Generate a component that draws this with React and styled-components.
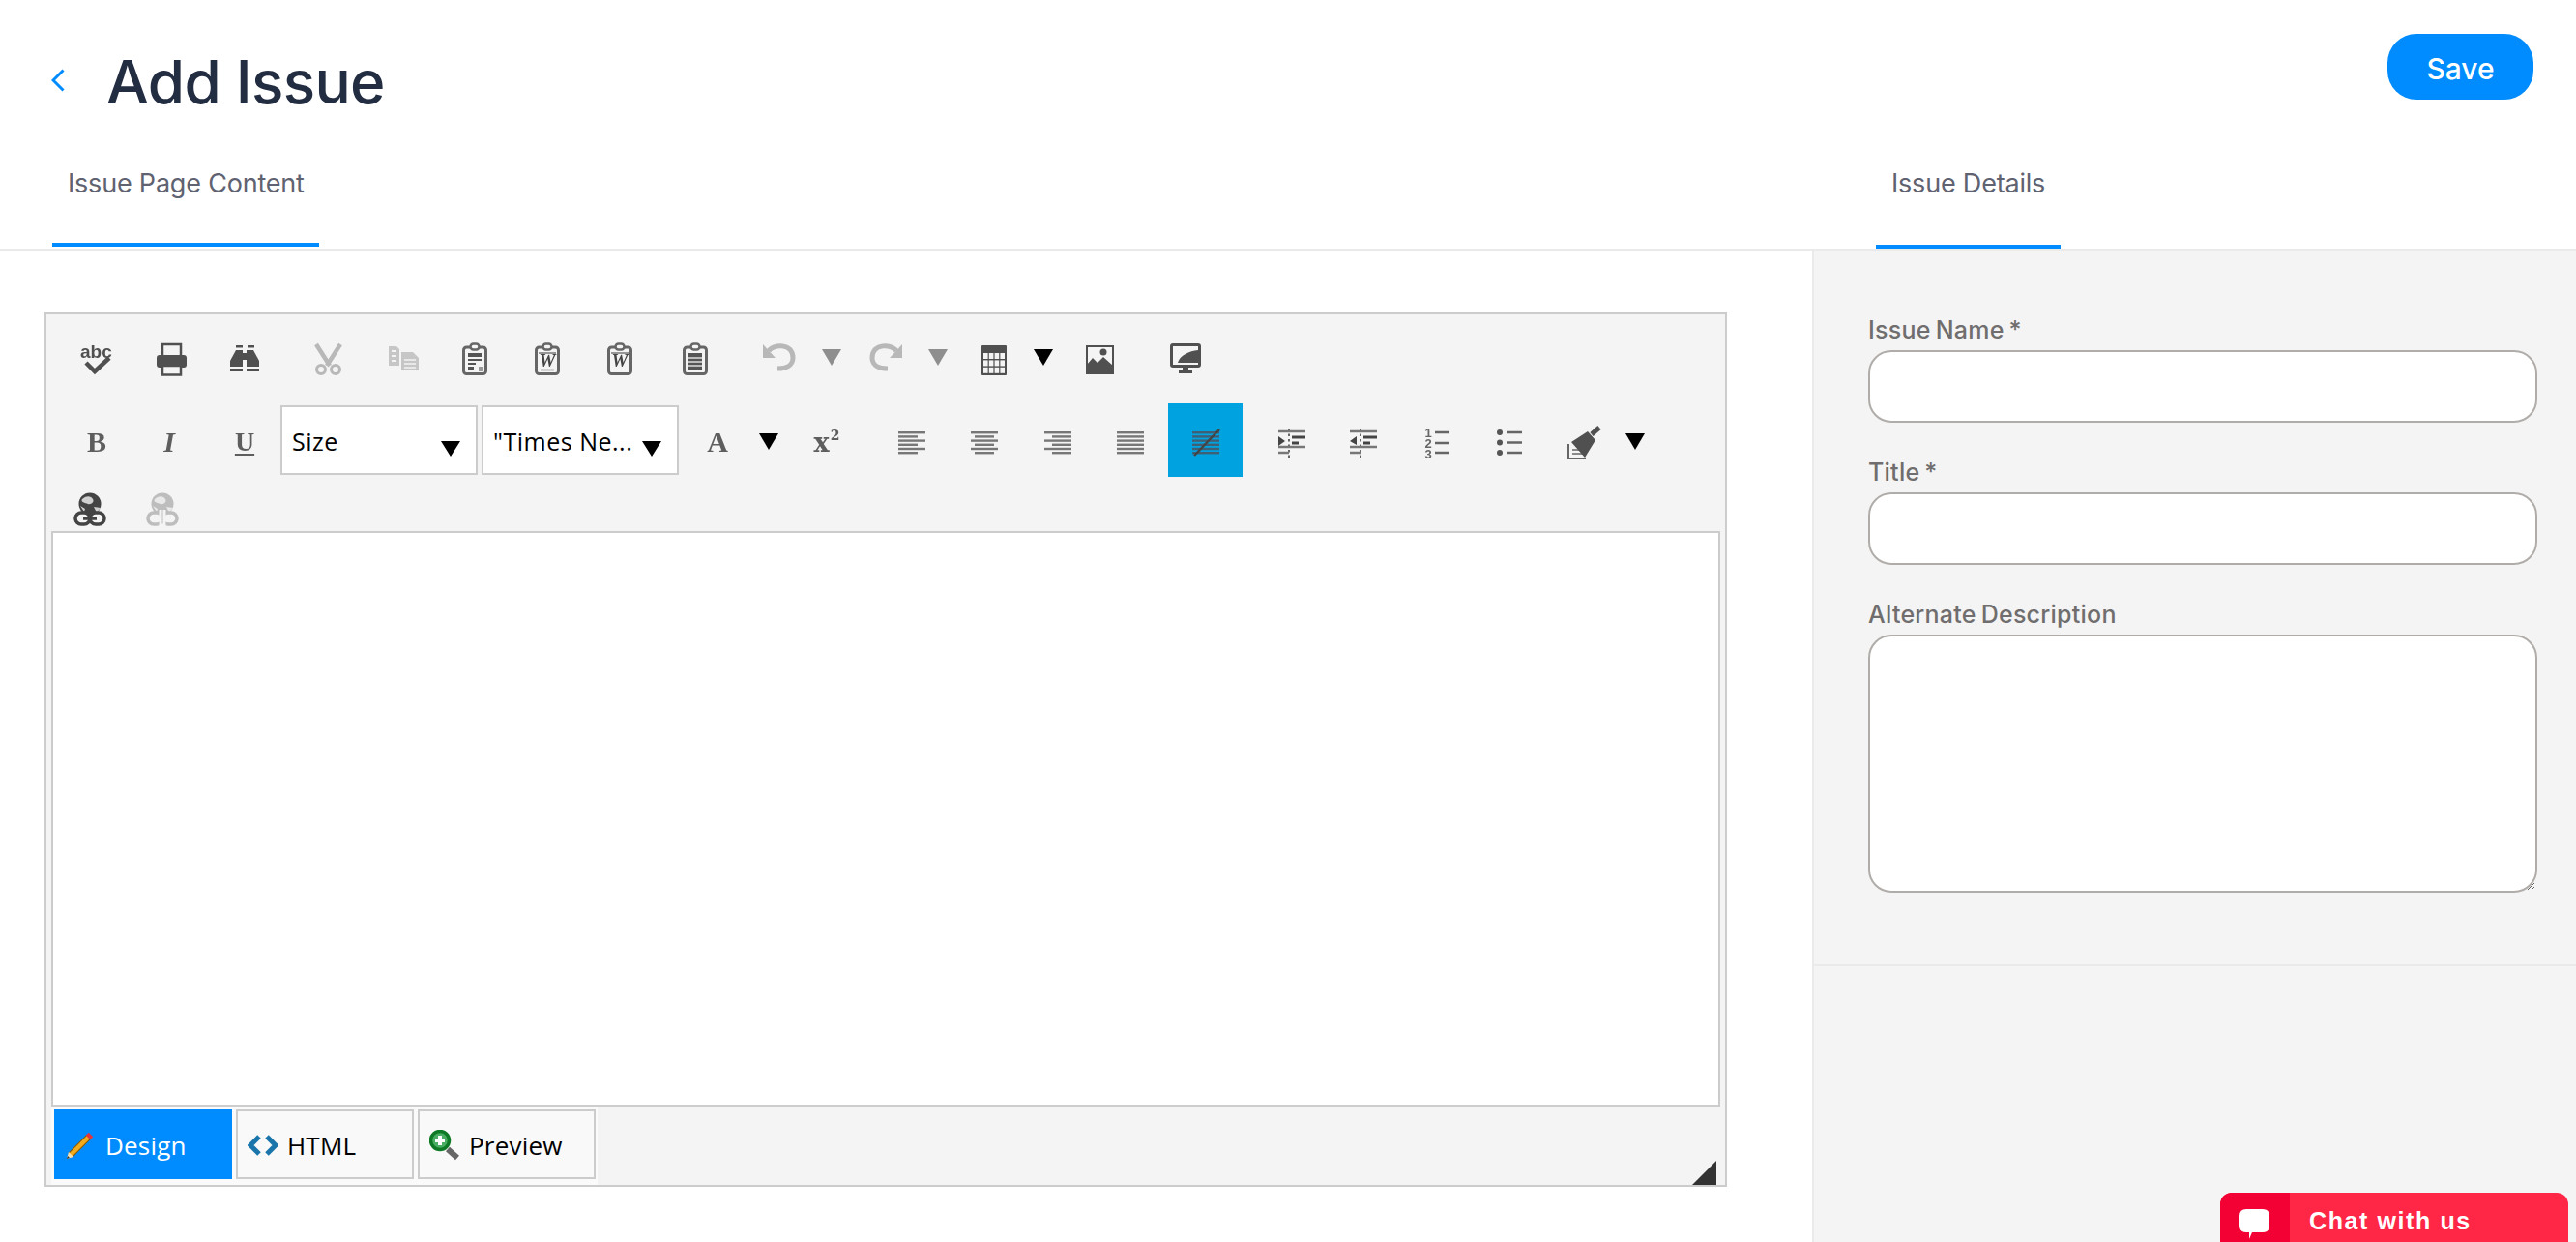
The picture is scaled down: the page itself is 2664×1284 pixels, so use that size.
import styled, { createGlobalStyle } from 'styled-components'

const Global = createGlobalStyle`
  html, body { margin: 0; padding: 0; background: #fff; }
  * { box-sizing: border-box; }
`

const S = {
  Page: styled.div`
    position: relative;
    width: 2664px;
    height: 1284px;
    overflow: hidden;
    display: flex;
    flex-direction: column;
    font-family: Inter, 'Liberation Sans', sans-serif;
  `,
  Header: styled.header`
    height: 148px;
    display: flex;
    align-items: flex-start;
    padding-left: 53px;
  `,
  Back: styled.svg`
    width: 14px;
    height: 24px;
    margin-top: 71px;
    flex: none;
  `,
  Title: styled.h1`
    margin: 45px 0 0 43px;
    font-size: 62px;
    line-height: 80px;
    font-weight: 500;
    letter-spacing: -0.7px;
    color: #232d42;
  `,
  Save: styled.button`
    margin: 35px 44px 0 auto;
    width: 151px;
    height: 68px;
    padding: 3px 0 0;
    border: 0;
    border-radius: 30px;
    background: #008cff;
    color: #fff;
    font-family: inherit;
    font-size: 30px;
    font-weight: 500;
  `,
  TabBar: styled.nav`
    height: 111px;
    display: flex;
    border-bottom: 2px solid #eaeaea;
  `,
  TabColumn: styled.div`
    display: flex;
    align-items: flex-end;
    width: ${({ $w }) => $w}px;
    padding-left: ${({ $pad }) => $pad}px;
  `,
  PageTab: styled.div`
    height: 107px;
    width: ${({ $w }) => $w}px;
    margin-bottom: ${({ $mb }) => $mb}px;
    padding: ${({ $top }) => $top}px 0 0 ${({ $pad }) => $pad}px;
    border-bottom: 4px solid #008cff;
    font-size: 27px;
    line-height: 40px;
    letter-spacing: -0.2px;
    color: #5f6270;
    white-space: nowrap;
  `,
  Body: styled.div`
    flex: 1;
    display: flex;
    min-height: 0;
  `,
  Main: styled.main`
    flex: 1;
    padding: 64px 0 0 46px;
  `,
  Sidebar: styled.aside`
    width: 790px;
    flex: none;
    background: #f4f4f4;
    border-left: 2px solid #eaeaea;
  `,
  Form: styled.form`
    display: flex;
    flex-direction: column;
    gap: 36px;
    padding: 67px 0 74px 56px;
    border-bottom: 2px solid #eaeaea;
  `,
  Field: styled.label`
    display: flex;
    flex-direction: column;
    gap: 6px;
    font-size: 25px;
    line-height: 30px;
    font-weight: 500;
    letter-spacing: 0.25px;
    word-spacing: -2px;
    color: #6f6d6d;
  `,
  Input: styled.input`
    width: 692px;
    height: 75px;
    border: 2px solid #b0aca9;
    border-radius: 24px;
    background: #fff;
    outline: 0;
  `,
  TextArea: styled.textarea`
    display: block;
    width: 692px;
    height: 267px;
    border: 2px solid #b0aca9;
    border-radius: 24px;
    background: #fff;
    outline: 0;
  `,
  Editor: styled.section`
    position: relative;
    width: 1740px;
    height: 904px;
    border: 2px solid #ccc;
    background: #f4f4f4;
    display: flex;
    flex-direction: column;
  `,
  Row: styled.div`
    display: flex;
    align-items: center;
    flex: none;
    height: ${({ $h }) => $h}px;
    padding-top: ${({ $pt }) => $pt || 0}px;
    padding-bottom: ${({ $pb }) => $pb || 0}px;
  `,
  Tool: styled.div`
    flex: none;
    width: 72px;
    height: ${({ $drop }) => 40 + ($drop || 0)}px;
    padding-top: ${({ $drop }) => $drop || 0}px;
    margin-left: ${({ $ml }) => $ml || 0}px;
    display: flex;
    align-items: center;
    justify-content: center;
  `,
  Highlight: styled.div`
    flex: none;
    width: 77px;
    height: 76px;
    padding-top: 4px;
    margin-left: ${({ $ml }) => $ml || 0}px;
    background: #00a3e0;
    display: flex;
    align-items: center;
    justify-content: center;
  `,
  Caret: styled.div`
    flex: none;
    width: 30px;
    height: ${({ $drop }) => 40 + ($drop || 0)}px;
    padding-top: ${({ $drop }) => $drop || 0}px;
    margin-left: ${({ $ml }) => $ml || 0}px;
    display: flex;
    align-items: center;
    justify-content: center;
    &::before {
      content: '';
      border-left: 10px solid transparent;
      border-right: 10px solid transparent;
      border-top: 17px solid ${({ $off }) => ($off ? '#8e8e8e' : '#000')};
    }
  `,
  Select: styled.div`
    flex: none;
    width: 204px;
    height: 72px;
    margin-left: ${({ $ml }) => $ml || 0}px;
    background: #fff;
    border: 2px solid #ccc;
    padding: 2px 0 0 10px;
    display: flex;
    align-items: center;
    position: relative;
    font-family: 'Open Sans', 'Noto Sans', sans-serif;
    font-size: 25px;
    letter-spacing: 0.5px;
    color: #000;
    &::after {
      content: '';
      position: absolute;
      right: ${({ $caretRight }) => $caretRight}px;
      top: 35px;
      border-left: 10px solid transparent;
      border-right: 10px solid transparent;
      border-top: 16px solid #000;
    }
  `,
  Letter: styled.span`
    font-family: ${({ $slab }) => ($slab ? "'DejaVu Serif'" : "'Liberation Serif'")}, serif;
    font-weight: 700;
    font-style: ${({ $italic }) => ($italic ? 'italic' : 'normal')};
    font-size: ${({ $size }) => $size || 30}px;
    line-height: 1;
    color: #5e5e5e;
    filter: blur(0.4px);
    text-decoration: ${({ $under }) => ($under ? 'underline' : 'none')};
    text-decoration-thickness: 2px;
    text-underline-offset: 3px;
    sup {
      font-size: 14px;
      margin-left: 1px;
      vertical-align: 12px;
      line-height: 0;
    }
  `,
  Content: styled.div`
    flex: none;
    height: 595px;
    margin: 0 5px;
    background: #fff;
    border: 2px solid #ccc;
  `,
  ModeBar: styled.div`
    flex: none;
    align-self: flex-start;
    display: flex;
    gap: 4px;
    height: 81px;
    margin-left: 5px;
    padding: 3px 2px 6px 3px;
    background: #fafafa;
  `,
  Mode: styled.div`
    width: 184px;
    height: 72px;
    padding: 2px 0 0 10px;
    display: flex;
    align-items: center;
    border: 2px solid ${({ $active }) => ($active ? '#008cff' : '#ccc')};
    background: ${({ $active }) => ($active ? '#008cff' : '#f9f9f9')};
    color: ${({ $active }) => ($active ? '#fff' : '#000')};
    font-family: 'Open Sans', 'Noto Sans', sans-serif;
    font-size: 26px;
    letter-spacing: 0.2px;
  `,
  ModeIcon: styled.span`
    width: 41px;
    flex: none;
    display: flex;
    align-items: center;
  `,
  Grip: styled.svg`
    position: absolute;
    right: 9px;
    bottom: 0;
    width: 25px;
    height: 25px;
  `,
  Chat: styled.div`
    position: absolute;
    right: 8px;
    bottom: 0;
    width: 360px;
    height: 51px;
    display: flex;
    border-radius: 12px 12px 0 0;
    overflow: hidden;
    background: #ff2646;
    color: #fff;
    font-family: 'Liberation Sans', sans-serif;
    font-weight: 700;
    font-size: 25px;
  `,
  ChatIcon: styled.div`
    width: 72px;
    background: #f30035;
    padding: 17px 0 0 20px;
  `,
  ChatText: styled.div`
    padding: 15px 0 0 20px;
    letter-spacing: 1.6px;
  `,
  Ico: styled.svg`
    width: 36px;
    height: 36px;
    flex: none;
    overflow: visible;
    filter: blur(0.5px);
  `,
}

const DARK = '#505050'
const BG = '#f4f4f4'
const OFF = '#b8b8b8'

const Spell = () => (
  <S.Ico viewBox="0 0 36 36">
    <text x="1" y="19" fontFamily="Liberation Sans" fontWeight="700" fontSize="19" fill={DARK}>abc</text>
    <path d="M7 24l9 9L31 19" fill="none" stroke={DARK} strokeWidth="4.5" />
  </S.Ico>
)
const Printer = () => (
  <S.Ico viewBox="0 0 36 36">
    <rect x="9" y="5" width="19" height="14" fill="none" stroke={DARK} strokeWidth="2.5" />
    <rect x="3" y="16" width="31" height="13" rx="3" fill={DARK} />
    <rect x="9" y="27" width="19" height="9.5" fill={BG} stroke={DARK} strokeWidth="2.5" />
  </S.Ico>
)
const Binoculars = () => (
  <S.Ico viewBox="0 0 36 36">
    <g fill={DARK}>
      <rect x="9" y="6" width="7" height="2.5" />
      <rect x="21" y="6" width="7" height="2.5" />
      <path d="M3 28v-6l6-11h7v17z" />
      <path d="M33 28v-6l-6-11h-7v17z" />
      <rect x="16" y="14" width="4" height="7" />
      <rect x="3" y="30" width="13" height="3" />
      <rect x="20" y="30" width="13" height="3" />
    </g>
  </S.Ico>
)
const Scissors = () => (
  <S.Ico viewBox="0 0 36 36">
    <path d="M7 5l14 22M32 5L18 27" fill="none" stroke={OFF} strokeWidth="4.5" />
    <circle cx="12" cy="31" r="4.5" fill="none" stroke={OFF} strokeWidth="3" />
    <circle cx="27" cy="31" r="4.5" fill="none" stroke={OFF} strokeWidth="3" />
  </S.Ico>
)
const CopyDocs = () => (
  <S.Ico viewBox="0 0 36 36">
    <path d="M2 7h8l3 3v17H2z" fill="#c6c6c6" />
    <path d="M5 12h5M5 17h5M5 22h5" stroke={BG} strokeWidth="2" />
    <path d="M15 13h12l6 6v13H15z" fill="#c6c6c6" />
    <path d="M18 21h12M18 25h12M18 29h12" stroke={BG} strokeWidth="1.5" />
  </S.Ico>
)
const Clipboard = ({ children }) => (
  <S.Ico viewBox="0 0 36 36">
    <rect x="6.5" y="8" width="23" height="27.5" rx="3" fill={BG} stroke="#666" strokeWidth="3" />
    <rect x="13.5" y="4.5" width="9" height="6" rx="3" fill={BG} stroke="#666" strokeWidth="2.5" />
    {children}
  </S.Ico>
)
const PasteW = ({ under }) => (
  <Clipboard>
    <path d="M9 14h18" stroke="#777" strokeWidth="1.5" />
    <text x="18" y="28" textAnchor="middle" fontFamily="Liberation Serif" fontStyle="italic" fontWeight="700" fontSize="19" fill="#444">W</text>
    {under && <path d="M11 31.5h14" stroke="#777" strokeWidth="1.5" />}
  </Clipboard>
)
const Paste = () => (
  <Clipboard>
    <path d="M11 14h14v4H11zM11 20h14v2H11zM11 24h8v2h-8zM11 28h6v3h-6z" fill="#555" />
    <rect x="22" y="28" width="5" height="5" fill="#999" />
  </Clipboard>
)
const PastePlain = () => (
  <Clipboard>
    <rect x="11" y="14" width="14" height="17" fill="#555" />
    <path d="M11 19h14M11 23h14M11 27h14" stroke="#ddd" strokeWidth="1.5" />
  </Clipboard>
)
const Undo = () => (
  <S.Ico viewBox="0 0 36 36">
    <path d="M2 19V5l13 14z" fill={OFF} />
    <path d="M8 12c4-7 25-9 25 7 0 8-8 11-16 11" fill="none" stroke={OFF} strokeWidth="5" />
  </S.Ico>
)
const Redo = () => (
  <S.Ico viewBox="0 0 36 36">
    <g transform="translate(36 0) scale(-1 1)">
      <path d="M2 19V5l13 14z" fill={OFF} />
      <path d="M8 12c4-7 25-9 25 7 0 8-8 11-16 11" fill="none" stroke={OFF} strokeWidth="5" />
    </g>
  </S.Ico>
)
const Table = () => (
  <S.Ico viewBox="0 0 36 36">
    <rect x="5" y="6" width="26" height="31" rx="1" fill={DARK} />
    {[0, 1, 2].map((r) =>
      [0, 1, 2, 3].map((c) => (
        <rect key={`${r}-${c}`} x={7 + c * 5.8} y={14 + r * 7.4} width="4.6" height="6" fill={BG} />
      ))
    )}
  </S.Ico>
)
const Picture = () => (
  <S.Ico viewBox="0 0 36 36">
    <rect x="5" y="7" width="27" height="28" fill={BG} stroke={DARK} strokeWidth="2" />
    <path d="M5 26l6-7 5 5 6-6 10 9v8H5z" fill={DARK} />
    <circle cx="22" cy="13" r="3.5" fill={DARK} />
  </S.Ico>
)
const Monitor = () => (
  <S.Ico viewBox="0 0 36 36">
    <rect x="3.5" y="5.5" width="29" height="22" rx="1.5" fill={BG} stroke={DARK} strokeWidth="3" />
    <path d="M10 24c2-8 12-12 21-13v13z" fill={DARK} />
    <path d="M15 29h6v3h-6zM11 32h14v3H11z" fill={DARK} />
  </S.Ico>
)
const Align = ({ lines, fill = '#777', slash }) => (
  <S.Ico viewBox="0 0 36 36">
    {lines.map(([x, w], i) => (
      <rect key={i} x={x} y={7 + i * 4.2} width={w} height="2.4" fill={fill} />
    ))}
    {slash && <path d="M6 32L32 5" stroke="#444" strokeWidth="2.5" />}
  </S.Ico>
)
const Indent = ({ out }) => (
  <S.Ico viewBox="0 0 36 36">
    <path d="M15 4v30" stroke="#666" strokeWidth="2" strokeDasharray="2.5 3" />
    <path d="M4 7h28M4 23h28M4 29h11" stroke="#777" strokeWidth="2.4" />
    <path d="M18 13h14M18 19h7" stroke="#444" strokeWidth="2.8" />
    <path d={out ? 'M4 17l7-5v9z' : 'M4 12l7 5-7 5z'} fill="#444" />
  </S.Ico>
)
const Numbered = () => (
  <S.Ico viewBox="0 0 36 36">
    <g fontFamily="Liberation Sans" fontSize="13" fontWeight="700" fill="#666" textAnchor="middle">
      <text x="8" y="13">1</text>
      <text x="8" y="24">2</text>
      <text x="8" y="35">3</text>
    </g>
    <path d="M15 8h15M15 19h15M15 29h15" stroke="#666" strokeWidth="2.4" />
  </S.Ico>
)
const Bullets = () => (
  <S.Ico viewBox="0 0 36 36">
    <g fill="#555">
      <circle cx="8" cy="8" r="3" />
      <circle cx="8" cy="18.5" r="3" />
      <circle cx="8" cy="29" r="3" />
    </g>
    <path d="M15 8h16M15 18.5h16M15 29h16" stroke="#666" strokeWidth="2.4" />
  </S.Ico>
)
const Brush = () => (
  <S.Ico viewBox="0 0 36 36">
    <path d="M2 20v15h18" fill="none" stroke="#666" strokeWidth="2" />
    <path d="M6 26h9M6 30h12" stroke="#666" strokeWidth="1.5" />
    <path d="M5 18l17-11 8 9-11 18z" fill={DARK} />
    <path d="M26 10l8-7" stroke={DARK} strokeWidth="5" />
  </S.Ico>
)
const Chain = ({ color, broken }) => (
  <S.Ico viewBox="0 0 36 36">
    <circle cx="18" cy="12" r="11.5" fill={color} />
    <path d="M10 7c5-4 9-3 11 0s-2 6-5 5-8-2-6-5zM22 15l7 1-4 5zM8 14l5 3-1 3z" fill={BG} opacity="0.8" />
    <rect x="3" y="21" width="15" height="12" rx="6" fill={BG} stroke={color} strokeWidth="3.5" />
    <rect x="18" y="21" width="15" height="12" rx="6" fill={BG} stroke={color} strokeWidth="3.5" />
    {broken ? (
      <path d="M16 18v18M20 18v18" stroke={BG} strokeWidth="3" />
    ) : (
      <path d="M11 27h14" stroke={color} strokeWidth="3.5" />
    )}
  </S.Ico>
)

const Pencil = () => (
  <svg width="30" height="30" viewBox="0 0 30 30">
    <path d="M5 25L24 6" stroke="#8a5a00" strokeWidth="6.5" />
    <path d="M5 25L24 6" stroke="#f2ab1c" strokeWidth="4.5" />
    <path d="M23 7l3-3" stroke="#e3343d" strokeWidth="6.5" />
    <path d="M1 29l2-7 5 5z" fill="#f6dfae" />
    <path d="M1 29l1-3 2 2z" fill="#333" />
  </svg>
)
const Brackets = () => (
  <svg width="32" height="22" viewBox="0 0 32 22">
    <path d="M12 2l-9 9 9 9M20 2l9 9-9 9" fill="none" stroke="#1a75ab" strokeWidth="5" />
  </svg>
)
const Magnifier = () => (
  <svg width="32" height="32" viewBox="0 0 32 32">
    <path d="M19 20l10 9" stroke="#666" strokeWidth="6" />
    <circle cx="11" cy="11" r="9.5" fill="#49ad62" stroke="#0f7a25" strokeWidth="3.5" />
    <path d="M11 6v10M6 11h10" stroke="#fff" strokeWidth="4" />
  </svg>
)

const left = [[4, 28], [4, 20], [4, 28], [4, 20], [4, 28], [4, 20]]
const center = [[4, 28], [8, 20], [4, 28], [8, 20], [4, 28], [8, 20]]
const right = [[4, 28], [12, 20], [4, 28], [12, 20], [4, 28], [12, 20]]
const justify = [[4, 28], [4, 28], [4, 28], [4, 28], [4, 28], [4, 28]]

const App = () => (
  <S.Page>
    <Global />
    <S.Header>
      <S.Back viewBox="0 0 14 24">
        <path d="M12.5 1.5L2 12l10.5 10.5" fill="none" stroke="#008cff" strokeWidth="3" />
      </S.Back>
      <S.Title>Add Issue</S.Title>
      <S.Save type="button">Save</S.Save>
    </S.Header>
    <S.TabBar>
      <S.TabColumn $w={1874} $pad={54}>
        <S.PageTab $w={276} $pad={16} $mb={2} $top={22}>Issue Page Content</S.PageTab>
      </S.TabColumn>
      <S.TabColumn $w={790} $pad={66}>
        <S.PageTab $w={191} $pad={16} $mb={0} $top={20}>Issue Details</S.PageTab>
      </S.TabColumn>
    </S.TabBar>
    <S.Body>
      <S.Main>
        <S.Editor>
          <S.Row $h={92} $pb={4}>
            <S.Tool $ml={16}><Spell /></S.Tool>
            <S.Tool $ml={5}><Printer /></S.Tool>
            <S.Tool $ml={4}><Binoculars /></S.Tool>
            <S.Tool $ml={13}><Scissors /></S.Tool>
            <S.Tool $ml={8}><CopyDocs /></S.Tool>
            <S.Tool $ml={1}><Paste /></S.Tool>
            <S.Tool $ml={3}><PasteW under /></S.Tool>
            <S.Tool $ml={3}><PasteW /></S.Tool>
            <S.Tool $ml={6}><PastePlain /></S.Tool>
            <S.Tool $ml={14}><Undo /></S.Tool>
            <S.Caret $ml={4} $off />
            <S.Tool $ml={6}><Redo /></S.Tool>
            <S.Caret $ml={2} $off />
            <S.Tool $ml={7}><Table /></S.Tool>
            <S.Caret $ml={0} />
            <S.Tool $ml={7}><Picture /></S.Tool>
            <S.Tool $ml={17}><Monitor /></S.Tool>
          </S.Row>
          <S.Row $h={76}>
            <S.Tool $ml={16} $drop={4}><S.Letter>B</S.Letter></S.Tool>
            <S.Tool $ml={3} $drop={4}><S.Letter $italic>I</S.Letter></S.Tool>
            <S.Tool $ml={6} $drop={4}><S.Letter $under $size={28}>U</S.Letter></S.Tool>
            <S.Select $ml={1} $caretRight={16}>Size</S.Select>
            <S.Select $ml={4} $caretRight={16}>"Times Ne...</S.Select>
            <S.Tool $ml={4} $drop={4}><S.Letter>A</S.Letter></S.Tool>
            <S.Caret $ml={2} $drop={2} />
            <S.Tool $ml={9} $drop={4}><S.Letter $slab $size={27}>x<sup>2</sup></S.Letter></S.Tool>
            <S.Tool $ml={16} $drop={4}><Align lines={left} /></S.Tool>
            <S.Tool $ml={3} $drop={4}><Align lines={center} /></S.Tool>
            <S.Tool $ml={4} $drop={4}><Align lines={right} /></S.Tool>
            <S.Tool $ml={3} $drop={4}><Align lines={justify} /></S.Tool>
            <S.Highlight $ml={3}><Align lines={justify} fill="#3f5f74" slash /></S.Highlight>
            <S.Tool $ml={15} $drop={4}><Indent /></S.Tool>
            <S.Tool $ml={2} $drop={4}><Indent out /></S.Tool>
            <S.Tool $ml={5} $drop={4}><Numbered /></S.Tool>
            <S.Tool $ml={2} $drop={4}><Bullets /></S.Tool>
            <S.Tool $ml={5} $drop={4}><Brush /></S.Tool>
            <S.Caret $ml={2} $drop={2} />
          </S.Row>
          <S.Row $h={56} $pt={12}>
            <S.Tool $ml={9}><Chain color="#444" /></S.Tool>
            <S.Tool $ml={3}><Chain color="#bdbdbd" broken /></S.Tool>
          </S.Row>
          <S.Content />
          <S.ModeBar>
            <S.Mode $active>
              <S.ModeIcon><Pencil /></S.ModeIcon>Design
            </S.Mode>
            <S.Mode>
              <S.ModeIcon><Brackets /></S.ModeIcon>HTML
            </S.Mode>
            <S.Mode>
              <S.ModeIcon><Magnifier /></S.ModeIcon>Preview
            </S.Mode>
          </S.ModeBar>
          <S.Grip viewBox="0 0 25 25">
            <path d="M25 0v25H0z" fill="#333" />
          </S.Grip>
        </S.Editor>
      </S.Main>
      <S.Sidebar>
        <S.Form>
          <S.Field>
            Issue Name *
            <S.Input />
          </S.Field>
          <S.Field>
            Title *
            <S.Input />
          </S.Field>
          <S.Field>
            Alternate Description
            <S.TextArea />
          </S.Field>
        </S.Form>
      </S.Sidebar>
    </S.Body>
    <S.Chat>
      <S.ChatIcon>
        <svg width="31" height="31" viewBox="0 0 31 31">
          <path d="M7 0h17q7 0 7 7v10q0 7-7 7H13l-3 7v-7H7q-7 0-7-7V7q0-7 7-7z" fill="#fff" />
        </svg>
      </S.ChatIcon>
      <S.ChatText>Chat with us</S.ChatText>
    </S.Chat>
  </S.Page>
)

export default App
